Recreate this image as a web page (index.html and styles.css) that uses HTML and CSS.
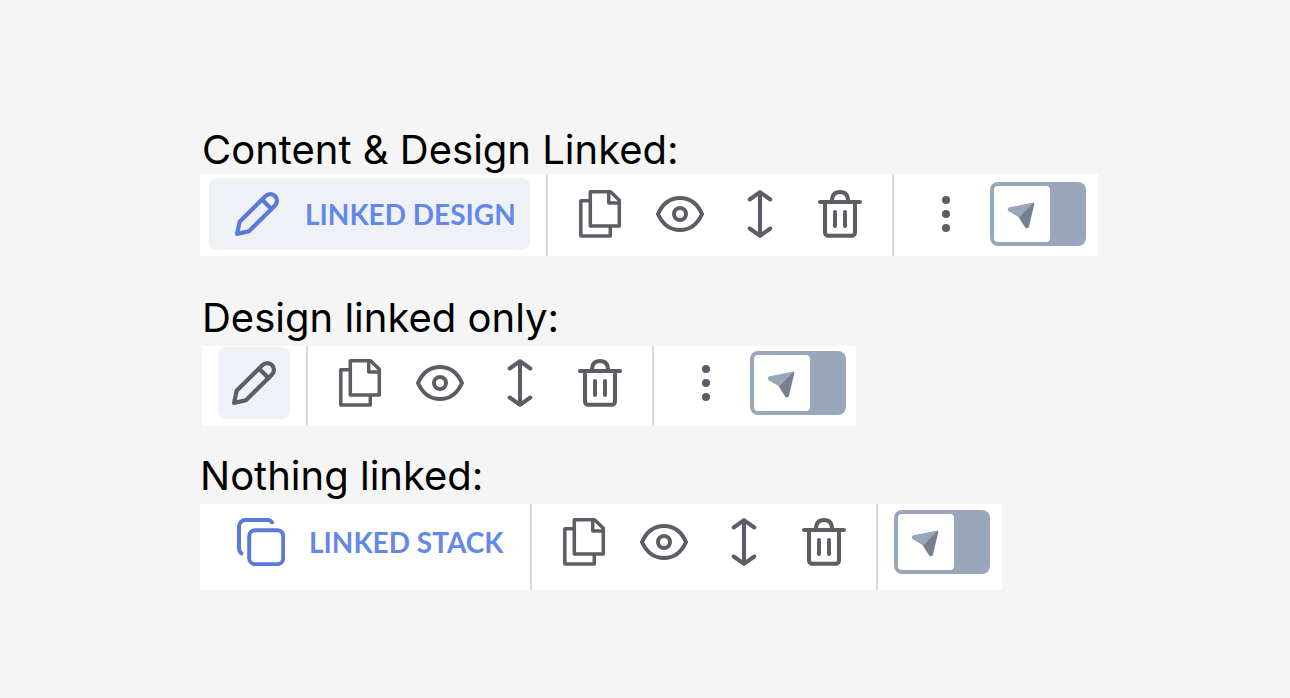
FILE: index.html
```
<!DOCTYPE html>
<html lang="en">
<head>
    <meta charset="UTF-8">
    <meta name="viewport" content="width=device-width, initial-scale=1.0">
    <title>Linked Toolbars</title>
    <link rel="stylesheet" href="styles.css">
</head>
<body>
    <!-- Shared toolbar icons -->
    <svg class="icon-defs" aria-hidden="true">
        <symbol id="pencil" viewBox="0 0 48 48">
            <g stroke-width="4.2">
                <path d="M4.1 43.9L6.6 31.8L32.6 6A6.6 6.6 0 0 1 42 15.4L16 41.3Z"/>
                <path d="M29 9.6L38.4 19"/>
            </g>
        </symbol>
        <symbol id="stack" viewBox="0 0 48 48">
            <rect x="12.2" y="12.2" width="34" height="34" rx="6"/>
            <path d="M35.5 6C35 3.2 33 2 30 2H8.5A6.5 6.5 0 0 0 2 8.5V30C2 33 3 35 6 36" stroke-linecap="butt"/>
        </symbol>
        <symbol id="copy" viewBox="0 0 48 48">
            <path d="M14 10.8H4.8V46H34.3V36.5"/>
            <path d="M14.3 1.8H34.5L43.3 10.3V36H14.3Z"/>
            <path d="M32.7 2.5V13H43"/>
        </symbol>
        <symbol id="eye" viewBox="0 0 48 48">
            <path d="M2 24C6 15 13.5 8 24 8S42 15 46 24C42 33 34.5 40 24 40S6 33 2 24Z"/>
            <circle cx="24" cy="24" r="6"/>
        </symbol>
        <symbol id="move" viewBox="0 0 48 48">
            <path d="M24 2.5V45.5M13.7 9.5L24 2.2L34.3 9.5M13.7 38.5L24 45.8L34.3 38.5"/>
        </symbol>
        <symbol id="trash" viewBox="0 0 48 48">
            <path d="M4 12H44M9 12V42.5A3.3 3.3 0 0 0 12.3 45.8H35.7A3.3 3.3 0 0 0 39 42.5V12"/>
            <path d="M16 11C16 5 19 2 24 2S32 5 32 11M19 22V36M29 22V36"/>
        </symbol>
        <symbol id="dots" viewBox="0 0 48 48">
            <g fill="currentColor" stroke="none">
                <circle cx="24" cy="10" r="4"/>
                <circle cx="24" cy="24" r="4"/>
                <circle cx="24" cy="38" r="4"/>
            </g>
        </symbol>
        <symbol id="plane" viewBox="0 0 56 56">
            <path d="M39.5 16.6L15.5 21.3C13.5 21.8 13.2 24 14.8 25.2L24.7 31.2Z" fill="#9aa6ba"/>
            <path d="M39.5 16.6C40.3 16.8 40.4 17.5 40.2 18.5L35 40.5C34.3 43 31.8 43 30.8 41L24.7 31.2Z" fill="#76818f"/>
        </symbol>
    </svg>

    <div class="container">
        <section class="example both-linked">
            <h2>Content &amp; Design Linked:</h2>
            <div class="toolbar">
                <div class="group edit-group">
                    <button class="link-btn active"><svg class="icon"><use href="#pencil"/></svg>LINKED DESIGN</button>
                </div>
                <div class="group">
                    <button class="icon-btn" aria-label="Copy"><svg class="icon thin"><use href="#copy"/></svg></button>
                    <button class="icon-btn" aria-label="Preview"><svg class="icon"><use href="#eye"/></svg></button>
                    <button class="icon-btn" aria-label="Move"><svg class="icon"><use href="#move"/></svg></button>
                    <button class="icon-btn" aria-label="Delete"><svg class="icon"><use href="#trash"/></svg></button>
                </div>
                <div class="group publish-group">
                    <button class="icon-btn" aria-label="More"><svg class="icon"><use href="#dots"/></svg></button>
                    <label class="toggle">
                        <input type="checkbox" aria-label="Publish">
                        <span class="knob"><svg><use href="#plane"/></svg></span>
                    </label>
                </div>
            </div>
        </section>

        <section class="example design-linked">
            <h2>Design linked only:</h2>
            <div class="toolbar">
                <div class="group edit-group">
                    <button class="pencil-btn active" aria-label="Edit"><svg class="icon"><use href="#pencil"/></svg></button>
                </div>
                <div class="group">
                    <button class="icon-btn" aria-label="Copy"><svg class="icon thin"><use href="#copy"/></svg></button>
                    <button class="icon-btn" aria-label="Preview"><svg class="icon"><use href="#eye"/></svg></button>
                    <button class="icon-btn" aria-label="Move"><svg class="icon"><use href="#move"/></svg></button>
                    <button class="icon-btn" aria-label="Delete"><svg class="icon"><use href="#trash"/></svg></button>
                </div>
                <div class="group publish-group">
                    <button class="icon-btn" aria-label="More"><svg class="icon"><use href="#dots"/></svg></button>
                    <label class="toggle">
                        <input type="checkbox" aria-label="Publish">
                        <span class="knob"><svg><use href="#plane"/></svg></span>
                    </label>
                </div>
            </div>
        </section>

        <section class="example not-linked">
            <h2>Nothing linked:</h2>
            <div class="toolbar">
                <div class="group edit-group">
                    <button class="link-btn"><svg class="icon"><use href="#stack"/></svg>LINKED STACK</button>
                </div>
                <div class="group">
                    <button class="icon-btn" aria-label="Copy"><svg class="icon thin"><use href="#copy"/></svg></button>
                    <button class="icon-btn" aria-label="Preview"><svg class="icon"><use href="#eye"/></svg></button>
                    <button class="icon-btn" aria-label="Move"><svg class="icon"><use href="#move"/></svg></button>
                    <button class="icon-btn" aria-label="Delete"><svg class="icon"><use href="#trash"/></svg></button>
                </div>
                <div class="group publish-group">
                    <label class="toggle">
                        <input type="checkbox" aria-label="Publish">
                        <span class="knob"><svg><use href="#plane"/></svg></span>
                    </label>
                </div>
            </div>
        </section>
    </div>
</body>
</html>
```
FILE: styles.css
```
* {
    box-sizing: border-box;
}
body {
    margin: 0;
    background-color: #f5f5f5;
    font-family: Inter, sans-serif;
    color: black;
}
.icon-defs {
    display: none;
}
.container {
    padding: 126px 0 0 200px;
}
h2 {
    margin: 0;
    padding-left: 2px;
    font-size: 40px;
    line-height: 48px;
    font-weight: 400;
}
.toolbar {
    display: flex;
    width: fit-content;
    background: white;
}
.group {
    display: flex;
    align-items: flex-start;
    padding: 4px 12px 6px;
}
.group + .group {
    border-left: 2px solid #dbdbdb;
}
.edit-group {
    padding-left: 9px;
    padding-right: 16px;
}
button {
    display: flex;
    align-items: center;
    justify-content: center;
    height: 72px;
    padding: 0;
    border: none;
    border-radius: 8px;
    background: none;
    color: #5d5d66;
    cursor: pointer;
}
.active {
    background: #eef2f7;
}
.link-btn {
    gap: 24px;
    padding: 0 14px 0 24px;
    font-family: Lato, sans-serif;
    font-size: 28px;
    font-weight: 700;
    color: #6488ea;
}
.link-btn .icon {
    color: #5b7ad8;
}
.pencil-btn {
    width: 72px;
}
.icon-btn {
    width: 80px;
}
.icon {
    width: 48px;
    height: 48px;
    flex-shrink: 0;
    fill: none;
    stroke: currentColor;
    stroke-width: 4;
    stroke-linecap: round;
    stroke-linejoin: round;
}
.thin {
    stroke-width: 3.5;
}
.toggle {
    position: relative;
    display: flex;
    width: 96px;
    height: 64px;
    margin: 4px 0 4px 4px;
    padding: 4px;
    border-radius: 8px;
    background: #9aa6ba;
    cursor: pointer;
}
.toggle input {
    position: absolute;
    inset: 0;
    width: 100%;
    height: 100%;
    margin: 0;
    opacity: 0;
}
.knob {
    width: 56px;
    height: 56px;
    border-radius: 4px;
    background: white;
}
.knob svg {
    display: block;
    width: 56px;
    height: 56px;
}

/* Each toolbar sits a little differently around its buttons */
.design-linked {
    margin-top: 38px;
}
.design-linked .toolbar {
    margin: 4px 0 0 2px;
}
.design-linked .group {
    padding-top: 1px;
    padding-bottom: 7px;
}
.design-linked .edit-group {
    padding-left: 16px;
}
.design-linked .publish-group {
    padding-right: 10px;
}
.not-linked {
    margin-top: 26px;
}
.not-linked h2 {
    padding-left: 0;
}
.not-linked .toolbar {
    margin-top: 4px;
}
.not-linked .group {
    padding-top: 2px;
    padding-bottom: 12px;
}
.not-linked .edit-group {
    padding-left: 13px;
    padding-right: 12px;
}
```
